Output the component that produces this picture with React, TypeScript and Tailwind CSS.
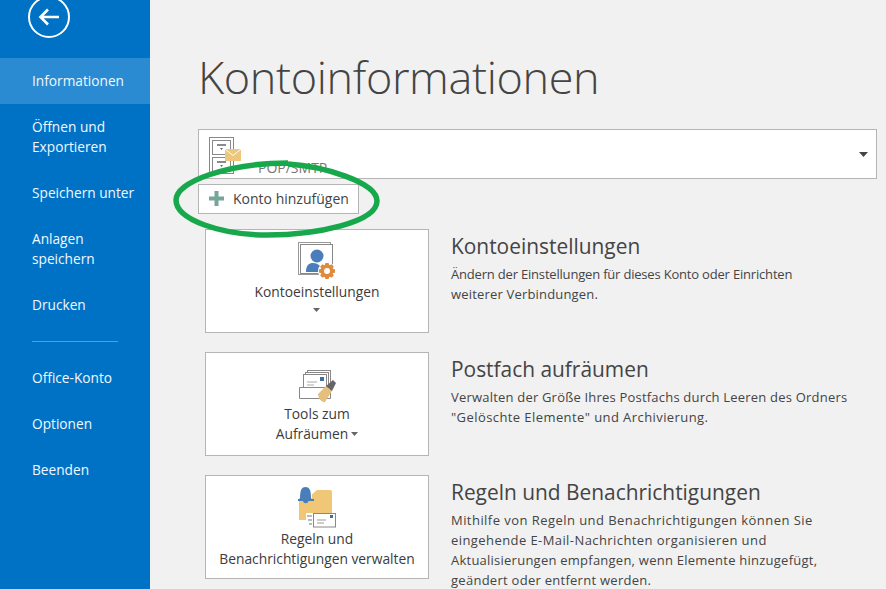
const font = { fontFamily: '"Open Sans", "Noto Sans", "Liberation Sans", sans-serif' };

function NavItem({ lines, active }: { lines: string[]; active?: boolean }) {
  return (
    <div className={`py-[13px] pl-[32px] text-[13.7px] leading-[20px] text-[#f2f8fd] ${active ? "bg-[#2a8bd2]" : ""}`}>
      {lines.map((l) => (
        <div key={l}>{l}</div>
      ))}
    </div>
  );
}

function Caret({ className = "" }: { className?: string }) {
  return (
    <svg width="7" height="4" viewBox="0 0 7 4" className={className}>
      <path d="M0 0h7L3.5 4z" fill="#666" />
    </svg>
  );
}

function AccountIcon() {
  return (
    <svg width="40" height="40" viewBox="0 0 40 40" className="-mt-[1px]">
      <rect x="1.5" y="0.5" width="32" height="32" fill="#fff" stroke="#999" />
      <rect x="3.5" y="2.5" width="32" height="29" fill="#fff" stroke="#888" />
      <circle cx="20" cy="14" r="6.500" fill="#4a7ebb" />
      <path d="M9 30c0-7 3-9 7-9 3 0 5 1 7 3v6z" fill="#4a7ebb" />
      <circle cx="30" cy="29" r="9" fill="#fff" />
      <g fill="#e08a3c">
        <circle cx="30" cy="29" r="6.500" />
        <rect x="28" y="21" width="4" height="16" rx="1" />
        <rect x="22" y="27" width="16" height="4" rx="1" />
        <rect x="28" y="21" width="4" height="16" rx="1" transform="rotate(45 30 29)" />
        <rect x="28" y="21" width="4" height="16" rx="1" transform="rotate(-45 30 29)" />
      </g>
      <circle cx="30" cy="29" r="3" fill="#fff" />
    </svg>
  );
}

function ToolsIcon() {
  return (
    <svg width="40" height="34" viewBox="0 0 40 34">
      <rect x="10.5" y="0.5" width="23" height="15" fill="#fff" stroke="#888" />
      <rect x="8.500" y="2.500" width="23" height="15" fill="#fff" stroke="#888" />
      <rect x="6.500" y="4.500" width="23" height="15" fill="#fff" stroke="#888" />
      <rect x="23" y="7" width="4" height="4" fill="#3f6f9f" />
      <path d="M10 12h10M10 15h7" stroke="#aaa" />
      <path d="M2.500 17.500h31v11h-31z" fill="#fff" stroke="#888" />
      <path d="M21 24l8-8 6 5-7 11c-3 1-7-4-7-8z" fill="#e6bf7c" />
      <path d="M29 16l7-6 3 3-4 8z" fill="#666" />
    </svg>
  );
}

function RulesIcon() {
  return (
    <svg width="40" height="41" viewBox="0 0 40 41" className="-mt-[2px]">
      <path d="M2 9h11l7-6h13a2 2 0 0 1 2 2v28H2z" fill="#efc777" />
      <path d="M9 26h8v15H9z" fill="#fff" />
      <path d="M2 11c0-8 2-12 6.500-12S15 3 15 11z" fill="#fff" />
      <path d="M3 12c0-8 1-12 5.500-12S14 4 14 12z" fill="#4a7ebb" />
      <path d="M1 12h16v2H1z" fill="#4a7ebb" />
      <path d="M6 14a2.800 2.800 0 0 0 5.500 0z" fill="#4a7ebb" />
      <rect x="16.500" y="26.500" width="22" height="13.500" fill="#fff" stroke="#888" />
      <rect x="33" y="28" width="3" height="3" fill="#3f6f9f" />
      <path d="M20 33h9M20 36h7" stroke="#999" />
      <path d="M10 29h5M11 33h4M12 37h3" stroke="#777" />
    </svg>
  );
}

type Line = { t: string; c: string };

function Section({
  icon,
  iconAlign,
  labelMt,
  label,
  title,
  text,
  gap,
}: {
  icon: React.ReactNode;
  iconAlign: string;
  labelMt: string;
  label: React.ReactNode;
  title: string;
  text: Line[];
  gap: string;
}) {
  return (
    <div className={`flex ${gap}`}>
      <div className="flex h-[104px] w-[224px] shrink-0 flex-col items-center border border-[#b5b5b5] bg-white pt-[13px] text-center text-[13.800px] font-medium leading-[20px] text-[#3c3c3c]">
        <div className={`flex h-[38px] ${iconAlign}`}>{icon}</div>
        <div className={labelMt}>{label}</div>
      </div>
      <div className="ml-[22px] min-w-0 flex-1 whitespace-nowrap">
        <div className="mt-[2px] text-[20.900px] leading-[30px] text-[#444]">{title}</div>
        <div className="mt-[3px] text-[13px] leading-[20px] text-[#444]">
          {text.map((l) => (
            <div key={l.t} className={l.c}>
              {l.t}
            </div>
          ))}
        </div>
      </div>
    </div>
  );
}

export default function App() {
  return (
    <div className="relative flex h-[589px] w-[886px] overflow-hidden bg-[#f1f1f1]" style={font}>
      <aside className="w-[150px] shrink-0 bg-[#0072c6]">
        <div className="flex h-[58px] items-start pl-[28px]">
          <svg width="42" height="42" viewBox="0 0 42 42" className="-mt-[4px]">
            <circle cx="21" cy="21" r="20" fill="none" stroke="#fff" strokeWidth="2" />
            <path d="M31 21H12.500M20 13.500L12.500 21l7.500 7.500" fill="none" stroke="#fff" strokeWidth="2.600" />
          </svg>
        </div>
        <NavItem lines={["Informationen"]} active />
        <NavItem lines={["Öffnen und", "Exportieren"]} />
        <NavItem lines={["Speichern unter"]} />
        <NavItem lines={["Anlagen", "speichern"]} />
        <NavItem lines={["Drucken"]} />
        <div className="mb-[13px] ml-8 mt-[13px] h-px w-[86px] bg-[#4f9fdc]" />
        <NavItem lines={["Office-Konto"]} />
        <NavItem lines={["Optionen"]} />
        <NavItem lines={["Beenden"]} />
      </aside>

      <main className="min-w-0 flex-1 pl-[48px] pr-[9px]">
        <h1 className="mt-[44px] h-[85px] text-[45px] font-light leading-[66px] tracking-[-0.36px] text-[#444]">
          Kontoinformationen
        </h1>

        <div className="relative flex h-[50px] items-center justify-end border border-[#b5b5b5] bg-white pr-[8px]">
          <svg width="34" height="37" viewBox="0 0 34 37" className="absolute left-[10px] top-[7px]">
            <rect x="0.500" y="0.500" width="24" height="36" fill="#fff" stroke="#888" />
            <rect x="3.500" y="3.500" width="18" height="14" fill="#fff" stroke="#888" />
            <rect x="3.500" y="20.500" width="18" height="14" fill="#fff" stroke="#888" />
            <path d="M8 8h9M8 25h9" stroke="#666" strokeWidth="1.500" />
            <path d="M11 11h3l-1.500 2zM11 28h3l-1.500 2z" fill="#666" />
            <rect x="16" y="12" width="16" height="12" fill="#ecc77c" />
            <path d="M16 12l8 6.500 8-6.500" fill="none" stroke="#fff" />
          </svg>
          <span className="absolute left-[59px] top-[28px] text-[14px] leading-[20px] text-[#777]">POP/SMTP</span>
          <svg width="9" height="5" viewBox="0 0 9 5">
            <path d="M0 0h9L4.500 5z" fill="#444" />
          </svg>
        </div>

        <div className="mt-[5px] flex h-[30px] w-[161px] items-center gap-[9px] border border-[#b5b5b5] bg-white pb-[1px] pl-[10px] text-[14px] text-[#444]">
          <svg width="15" height="15" viewBox="0 0 15 15">
            <path d="M5.500 0h4v5.500H15v4H9.500V15h-4V9.500H0v-4h5.500z" fill="#77a598" />
          </svg>
          <span>Konto hinzufügen</span>
        </div>

        <div className="ml-[7px] mt-[15px] flex flex-col">
          <Section
            gap="mb-[19px]"
            iconAlign="items-start"
            labelMt="mt-[1px]"
            icon={<AccountIcon />}
            label={
              <div className="flex flex-col items-center">
                <span>Kontoeinstellungen</span>
                <Caret className="mt-[6px]" />
              </div>
            }
            title="Kontoeinstellungen"
            text={[
              { t: "Ändern der Einstellungen für dieses Konto oder Einrichten", c: "tracking-[-0.19px]" },
              { t: "weiterer Verbindungen.", c: "tracking-[0.18px]" },
            ]}
          />
          <Section
            gap="mb-[19px]"
            iconAlign="items-end"
            labelMt="mt-0"
            icon={<ToolsIcon />}
            label={
              <>
                <div>Tools zum</div>
                <div className="flex items-center justify-center gap-[3px]">
                  Aufräumen <Caret />
                </div>
              </>
            }
            title="Postfach aufräumen"
            text={[
              { t: "Verwalten der Größe Ihres Postfachs durch Leeren des Ordners", c: "tracking-[0.2px]" },
              { t: '"Gelöschte Elemente" und Archivierung.', c: "tracking-[0.42px]" },
            ]}
          />
          <Section
            gap=""
            iconAlign="items-start"
            labelMt="mt-[2px]"
            icon={<RulesIcon />}
            label={
              <>
                <div>Regeln und</div>
                <div>Benachrichtigungen verwalten</div>
              </>
            }
            title="Regeln und Benachrichtigungen"
            text={[
              { t: "Mithilfe von Regeln und Benachrichtigungen können Sie", c: "tracking-[0.45px]" },
              { t: "eingehende E-Mail-Nachrichten organisieren und", c: "tracking-[0.42px]" },
              { t: "Aktualisierungen empfangen, wenn Elemente hinzugefügt,", c: "tracking-[0.24px]" },
              { t: "geändert oder entfernt werden.", c: "tracking-[0.27px]" },
            ]}
          />
        </div>
      </main>

      <svg width="210" height="80" viewBox="0 0 210 80" className="pointer-events-none absolute left-[172px] top-[160px]">
        <path
          d="M116 4C150 6 205 22 205 41C205 62 145 75 95 75C50 75 4 60 4 40C4 22 55 3 116 3"
          fill="none"
          stroke="#17a84c"
          strokeWidth="5.500"
        />
      </svg>
    </div>
  );
}
